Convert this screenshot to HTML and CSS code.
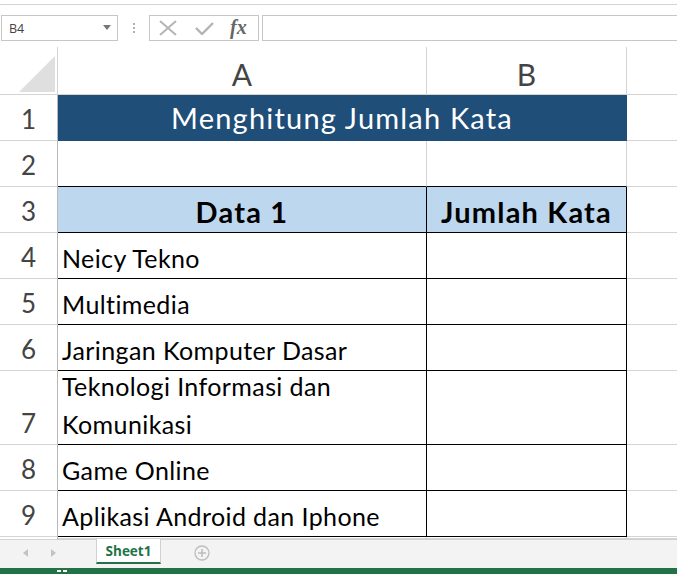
FILE: index.html
```html
<!DOCTYPE html>
<html lang="id">
<head>
    <meta charset="UTF-8" />
    <meta name="viewport" content="width=device-width, initial-scale=1" />
    <title>Menghitung Jumlah Kata</title>
    <link rel="stylesheet" href="styles.css">
</head>
<body>
    <div class="ribbon-edge"></div>

    <!-- formula bar -->
    <div class="formula-bar">
        <div class="name-box">
            <span>B4</span>
            <svg class="caret" width="8" height="5" viewBox="0 0 8 5"><path d="M0 0h8L4 5z" fill="#777"/></svg>
        </div>
        <div class="grip"><i></i><i></i><i></i></div>
        <div class="fx-buttons">
            <svg width="18" height="16" viewBox="0 0 18 16"><path d="M1 1l16 14M17 1L1 15" stroke="#b4b4b4" stroke-width="2" fill="none"/></svg>
            <svg width="19" height="13" viewBox="0 0 19 13"><path d="M1 6l6 6L18 1" stroke="#b4b4b4" stroke-width="2.4" fill="none"/></svg>
            <span class="fx">fx</span>
        </div>
        <div class="formula-input"></div>
    </div>

    <!-- grid -->
    <div class="sheet">
        <div class="corner"><svg width="36" height="36" viewBox="0 0 36 36"><path d="M0 36L36 0v36z" fill="#dfdfdf"/></svg></div>
        <div class="col-head">A</div>
        <div class="col-head">B</div>
        <div class="col-head empty"></div>

        <div class="row-head">1</div>
        <div class="cell title">Menghitung Jumlah Kata</div>
        <div class="cell out"></div>

        <div class="row-head">2</div>
        <div class="cell top-edge"></div>
        <div class="cell top-edge"></div>
        <div class="cell out"></div>

        <div class="row-head">3</div>
        <div class="cell boxed head">Data 1</div>
        <div class="cell boxed head">Jumlah Kata</div>
        <div class="cell out"></div>

        <div class="row-head">4</div>
        <div class="cell boxed">Neicy Tekno</div>
        <div class="cell boxed"></div>
        <div class="cell out"></div>

        <div class="row-head">5</div>
        <div class="cell boxed">Multimedia</div>
        <div class="cell boxed"></div>
        <div class="cell out"></div>

        <div class="row-head">6</div>
        <div class="cell boxed">Jaringan Komputer Dasar</div>
        <div class="cell boxed"></div>
        <div class="cell out"></div>

        <div class="row-head">7</div>
        <div class="cell boxed">Teknologi Informasi dan<br>Komunikasi</div>
        <div class="cell boxed"></div>
        <div class="cell out"></div>

        <div class="row-head">8</div>
        <div class="cell boxed">Game Online</div>
        <div class="cell boxed"></div>
        <div class="cell out"></div>

        <div class="row-head">9</div>
        <div class="cell boxed">Aplikasi Android dan Iphone</div>
        <div class="cell boxed"></div>
        <div class="cell out"></div>

        <div class="row-head"></div>
        <div class="cell"></div>
        <div class="cell"></div>
        <div class="cell out"></div>
    </div>

    <!-- sheet tabs -->
    <div class="tab-bar">
        <div class="tab-nav">
            <svg width="5" height="8" viewBox="0 0 5 8"><path d="M5 0v8L0 4z" fill="#c3c3c3"/></svg>
            <svg width="5" height="8" viewBox="0 0 5 8"><path d="M0 0v8l5-4z" fill="#c3c3c3"/></svg>
        </div>
        <div class="tab active">Sheet1</div>
        <svg class="add-sheet" width="16" height="16" viewBox="0 0 16 16">
            <circle cx="8" cy="8" r="7" fill="none" stroke="#bdbdbd" stroke-width="1.3"/>
            <path d="M8 4v8M4 8h8" stroke="#bdbdbd" stroke-width="1.5"/>
        </svg>
    </div>
    <div class="status-bar">
        <svg width="14" height="6" viewBox="0 0 14 6"><path d="M2 3h4M8 3h4" stroke="#fff" stroke-width="2"/></svg>
    </div>
</body>
</html>
```

FILE: styles.css
```css
body {
    margin: 0;
    width: 677px;
    height: 574px;
    overflow: hidden;
    background: #fff;
    font-family: Lato, "Noto Sans", sans-serif;
}

/* ribbon edge + formula bar */
.ribbon-edge {
    height: 4px;
    border-bottom: 1px solid #d4d4d4;
}
.formula-bar {
    display: flex;
    align-items: center;
    height: 26px;
    margin: 10px 0 6px;
}
.name-box {
    box-sizing: border-box;
    width: 117px;
    height: 26px;
    margin-left: 1px;
    border: 1px solid #c6c6c6;
    display: flex;
    align-items: center;
    justify-content: space-between;
    padding: 0 6px 0 7px;
    font-family: "Open Sans", "Liberation Sans", sans-serif;
    font-size: 12.5px;
    color: #444;
}
.name-box .caret {
    margin-top: -1px;
}
.grip {
    width: 31px;
    display: flex;
    flex-direction: column;
    align-items: center;
    gap: 2px;
}
.grip i {
    width: 2px;
    height: 2px;
    background: #b0b0b0;
}
.fx-buttons {
    box-sizing: border-box;
    width: 110px;
    height: 26px;
    border: 1px solid #c6c6c6;
    display: flex;
    align-items: center;
    padding-left: 9px;
    gap: 18px;
}
.fx {
    font-family: "Liberation Serif", "DejaVu Serif", serif;
    font-style: italic;
    font-weight: 700;
    font-size: 20px;
    color: #666;
    margin-left: -2px;
    margin-top: -2px;
}
.formula-input {
    flex: 1;
    height: 26px;
    box-sizing: border-box;
    margin-left: 3px;
    border: 1px solid #c6c6c6;
    border-right: none;
}

/* spreadsheet grid */
.sheet {
    display: grid;
    grid-template-columns: 58px 369px 200px 1fr;
    grid-template-rows: 48px repeat(6, 46px) 74px 46px 46px 2px;
}
.sheet > div {
    box-sizing: border-box;
    border-right: 1px solid #d4d4d4;
    border-bottom: 1px solid #d4d4d4;
    overflow: hidden;
    white-space: nowrap;
}
.corner {
    display: flex;
    align-items: flex-end;
    justify-content: flex-end;
    padding: 0 2px 2px 0;
}
.col-head {
    display: flex;
    align-items: flex-end;
    justify-content: center;
    font-size: 30px;
    line-height: 1;
    padding-bottom: 5px;
    color: #444;
}
.sheet > .col-head.empty {
    border-right: none;
}
.row-head {
    display: flex;
    align-items: flex-end;
    justify-content: center;
    font-size: 26px;
    line-height: 38px;
    padding-bottom: 2px;
    color: #444;
}
.sheet > .row-head {
    border-right-color: #b8b8b8;
}
.cell {
    display: flex;
    align-items: flex-end;
    font-size: 25px;
    letter-spacing: 0.4px;
    line-height: 38px;
    padding: 0 0 1px 4px;
    color: #000;
}
.sheet > .out {
    border-right: none;
}
.sheet > .title {
    grid-column: span 2;
    justify-content: center;
    background: #1f4e78;
    color: #fff;
    border-color: #1f4e78;
    padding-left: 0;
    font-size: 29px;
    letter-spacing: 1.2px;
    padding-bottom: 3px;
}
.sheet > .top-edge {
    border-bottom-color: #000;
}
.sheet > .boxed {
    border-right-color: #000;
    border-bottom-color: #000;
}
.head {
    justify-content: center;
    background: #bdd7ee;
    font-weight: 700;
    font-size: 29px;
    letter-spacing: 1.2px;
    padding-left: 0;
}

/* sheet tabs */
.tab-bar {
    height: 28px;
    border-top: 1px solid #d0d0d0;
    background: #f3f3f3;
    display: flex;
    align-items: flex-start;
}
.tab-nav {
    width: 96px;
    height: 26px;
    display: flex;
    align-items: center;
    padding-left: 23px;
    gap: 23px;
    box-sizing: border-box;
}
.tab {
    box-sizing: border-box;
    width: 65px;
    height: 25px;
    margin-top: -1px;
    background: #fff;
    border-left: 1px solid #d0d0d0;
    border-right: 1px solid #d0d0d0;
    border-bottom: 2px solid #217346;
    display: flex;
    align-items: center;
    justify-content: center;
    font-family: "Open Sans", "Liberation Sans", sans-serif;
    font-weight: 700;
    font-size: 13.5px;
    color: #217346;
}
.add-sheet {
    margin: 5px 0 0 33px;
}
.status-bar {
    height: 6px;
    background: #217346;
    padding-left: 55px;
    display: flex;
    align-items: flex-start;
}
```
